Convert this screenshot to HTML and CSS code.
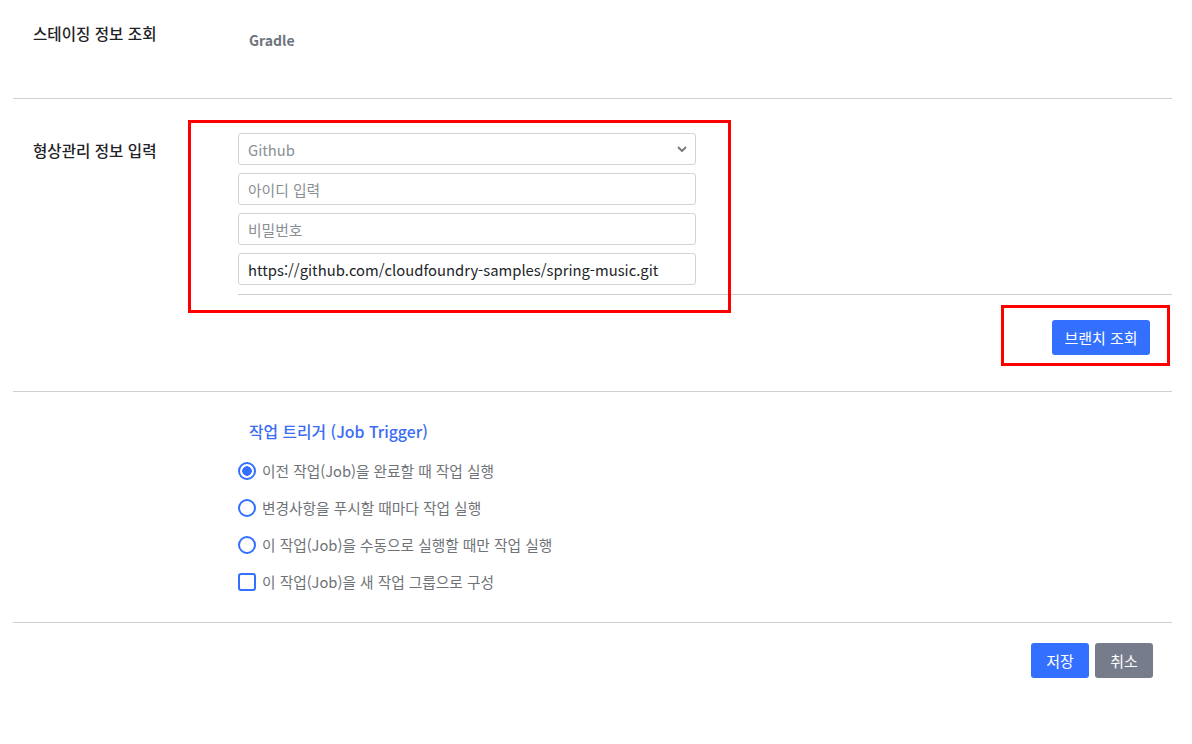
FILE: index.html
```html
<!DOCTYPE html>
<html lang="ko">
<head>
<meta charset="utf-8">
<link rel="stylesheet" href="styles.css">
</head>
<body>
<div class="page">
  <section class="row row-stage">
    <div class="label">스테이징 정보 조회</div>
    <div class="content"><span class="value">Gradle</span></div>
  </section>

  <section class="row row-scm">
    <div class="label">형상관리 정보 입력</div>
    <div class="content">
      <div class="fields">
        <div class="select">
          <span>Github</span>
          <svg class="chev" width="10" height="8" viewBox="0 0 10 8"><path d="M1.5 2.5 L5 6 L8.5 2.5" fill="none" stroke="#777" stroke-width="1.8" stroke-linecap="round" stroke-linejoin="round"/></svg>
        </div>
        <div class="input placeholder">아이디 입력</div>
        <div class="input placeholder">비밀번호</div>
        <div class="input">https://github.com/cloudfoundry-samples/spring-music.git</div>
      </div>
      <div class="branch-bar">
        <button class="btn btn-primary btn-branch">브랜치 조회</button>
      </div>
    </div>
    <div class="mark mark-fields"></div>
    <div class="mark mark-branch"></div>
  </section>

  <section class="row row-trigger">
    <div class="label"></div>
    <div class="content">
      <div class="trigger-title">작업 트리거 (Job Trigger)</div>
      <ul class="options">
        <li><span class="radio checked"></span>이전 작업(Job)을 완료할 때 작업 실행</li>
        <li><span class="radio"></span>변경사항을 푸시할 때마다 작업 실행</li>
        <li><span class="radio"></span>이 작업(Job)을 수동으로 실행할 때만 작업 실행</li>
        <li><span class="check"></span>이 작업(Job)을 새 작업 그룹으로 구성</li>
      </ul>
    </div>
  </section>

  <div class="actions">
    <button class="btn btn-primary">저장</button>
    <button class="btn btn-secondary">취소</button>
  </div>
</div>
</body>
</html>
```

FILE: styles.css
```css
* { box-sizing: border-box; }
html, body { margin: 0; padding: 0; background: #fff; }
body {
  font-family: "Noto Sans CJK KR", "Noto Sans", sans-serif;
  color: #212529;
}
.page {
  width: 1159px;
  margin-left: 13px;
}
.row {
  display: grid;
  grid-template-columns: 225px 1fr;
  position: relative;
}
.label {
  padding-left: 20px;
  font-size: 15.6px;
  font-weight: 500;
  color: #1f2226;
  line-height: 22px;
}
.row-stage {
  height: 99px;
  border-bottom: 1px solid #d0d0d0;
  padding-top: 22px;
}
.value {
  display: inline-block;
  margin-left: 11px;
  margin-top: 7px;
  font-size: 14px;
  font-weight: 700;
  color: #6c757d;
  line-height: 22px;
}
.row-scm {
  padding-top: 34px;
  border-bottom: 1px solid #d0d0d0;
}
.row-scm .label { padding-top: 6px; }
.fields {
  width: 458px;
  display: flex;
  flex-direction: column;
  gap: 8px;
  padding-bottom: 9px;
}
.select, .input {
  height: 32px;
  border: 1px solid #ced4da;
  border-radius: 3px;
  padding: 0 9px;
  display: flex;
  align-items: center;
  font-size: 14.8px;
  color: #212529;
}
.select { justify-content: space-between; color: #8a8f94; }
.chev { margin-right: -1px; }
.placeholder { color: #8a8f94; }
.branch-bar {
  border-top: 1px solid #d0d0d0;
  display: flex;
  justify-content: flex-end;
  padding: 25px 22px 36px 0;
}
.btn {
  font-family: inherit;
  border: 0;
  border-radius: 3px;
  color: #fff;
  font-size: 15px;
  height: 35px;
  padding: 0 15px;
  cursor: pointer;
}
.btn-primary { background: #3370ff; }
.btn-secondary { background: #777c8c; }
.btn-branch { width: 98px; padding: 0; }
.mark {
  position: absolute;
  border: 3px solid #ff0000;
  pointer-events: none;
}
.mark-fields { left: 175px; top: 21px; width: 543px; height: 193px; }
.mark-branch { left: 988px; top: 206px; width: 169px; height: 61px; }

.row-trigger {
  border-bottom: 1px solid #d0d0d0;
  padding-top: 29px;
  padding-bottom: 29px;
}
.trigger-title {
  margin-left: 11px;
  font-size: 15.8px;
  font-weight: 500;
  color: #3a6cf4;
  line-height: 22px;
}
.options {
  list-style: none;
  margin: 17px 0 0;
  padding: 0;
  display: flex;
  flex-direction: column;
  gap: 15px;
}
.options li {
  display: flex;
  align-items: center;
  gap: 6px;
  font-size: 14.7px;
  color: #6f7378;
  line-height: 22px;
}
.radio, .check {
  width: 18px;
  height: 18px;
  border: 2px solid #3370ff;
  flex: none;
}
.radio { border-radius: 50%; }
.radio.checked {
  background: radial-gradient(circle, #3370ff 0 4.5px, #fff 5px);
}
.check { border-radius: 3px; }

.actions {
  display: flex;
  justify-content: flex-end;
  gap: 6px;
  padding: 20px 19px 0 0;
}
.actions .btn { width: 58px; padding: 0; }
```
